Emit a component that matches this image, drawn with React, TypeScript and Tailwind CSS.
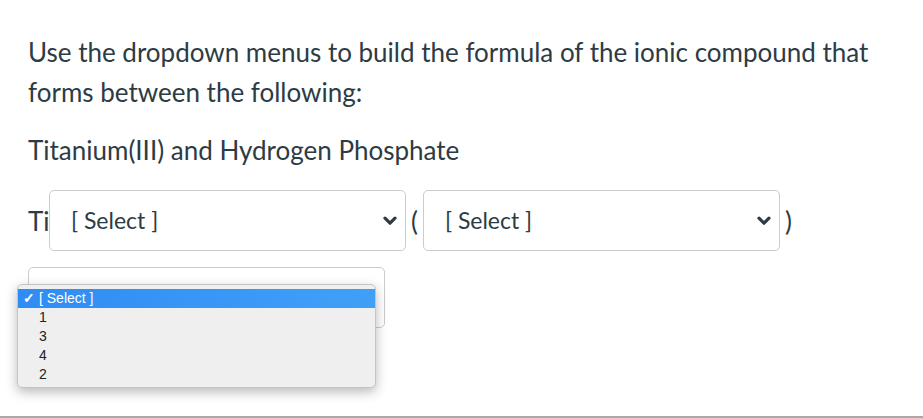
import React from "react";

function Chevron() {
  return (
    <svg width="14" height="10" viewBox="0 0 14 10" className="shrink-0">
      <path d="M2 2.2 L7 7.2 L12 2.2" fill="none" stroke="#2d3b45" strokeWidth="3.2" strokeLinecap="round" strokeLinejoin="round" />
    </svg>
  );
}

function FakeSelect({ label }: { label: string }) {
  return (
    <div className="flex h-[61px] w-[357px] shrink-0 items-center justify-between rounded-[5px] border border-[#c7cdd1] bg-white pl-[21px] pr-[8px]">
      <span className="text-[23px] leading-none text-[#2d3b45]">{label}</span>
      <Chevron />
    </div>
  );
}

export default function App() {
  return (
    <div
      className="relative h-[418px] w-[923px] overflow-hidden border-b-2 border-[#a9a9a9] bg-white text-[#2d3b45]"
      style={{ fontFamily: "Lato, 'Open Sans', sans-serif" }}
    >
      <div className="pl-[28px] pr-[30px] pt-[32px]">
        <p className="text-[26px] leading-[40px]">
          Use the dropdown menus to build the formula of the ionic compound that forms between the following:
        </p>
        <p className="mt-[18px] text-[26px] leading-[40px]">Titanium(III) and Hydrogen Phosphate</p>
        <div className="mt-[20px] flex flex-wrap items-center gap-y-[16px]">
          <span className="w-[21px] text-[26px] leading-none">Ti</span>
          <FakeSelect label="[ Select ]" />
          <span className="mx-[5px] text-[26px] leading-none">(</span>
          <FakeSelect label="[ Select ]" />
          <span className="ml-[5px] text-[26px] leading-none">)</span>
          <FakeSelect label="" />
        </div>
      </div>

      <div
        className="absolute left-[17px] top-[284px] w-[359px] rounded-[5px] border border-[#c4c4c4] bg-[#efefef] pb-[3px] pt-[4px] shadow-[0_4px_12px_rgba(0,0,0,0.28)]"
        style={{ fontFamily: "'Liberation Sans', Arial, sans-serif" }}
      >
        <div className="flex h-[19px] items-center bg-gradient-to-r from-[#2f8cf4] to-[#40a0f8] text-[14px] text-white">
          <span className="w-[21px] pl-[5px] text-[14px] font-bold">✓</span>
          <span>[ Select ]</span>
        </div>
        {["1", "3", "4", "2"].map((n) => (
          <div key={n} className="flex h-[19px] items-center pl-[21px] text-[14px] text-[#222]">
            {n}
          </div>
        ))}
      </div>
    </div>
  );
}
